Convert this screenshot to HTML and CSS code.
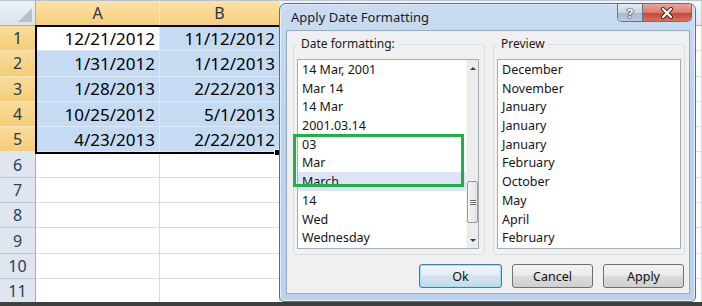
FILE: index.html
```html
<!DOCTYPE html>
<html lang="en">
<head>
    <meta charset="UTF-8">
    <title>Apply Date Formatting</title>
    <link rel="stylesheet" href="styles.css">
</head>
<body>
    <div class="screen">
        <div class="sheet">
            <div class="corner"></div>
            <div class="col-head sel">A</div>
            <div class="col-head sel">B</div>
            <div class="col-head">C</div>

            <div class="row-head sel">1</div>
            <div class="cell active">12/21/2012</div>
            <div class="cell sel">11/12/2012</div>
            <div class="cell"></div>

            <div class="row-head sel">2</div>
            <div class="cell sel">1/31/2012</div>
            <div class="cell sel">1/12/2013</div>
            <div class="cell"></div>

            <div class="row-head sel">3</div>
            <div class="cell sel">1/28/2013</div>
            <div class="cell sel">2/22/2013</div>
            <div class="cell"></div>

            <div class="row-head sel">4</div>
            <div class="cell sel">10/25/2012</div>
            <div class="cell sel">5/1/2013</div>
            <div class="cell"></div>

            <div class="row-head sel">5</div>
            <div class="cell sel">4/23/2013</div>
            <div class="cell sel">2/22/2012</div>
            <div class="cell"></div>

            <div class="row-head">6</div>
            <div class="cell"></div><div class="cell"></div><div class="cell"></div>
            <div class="row-head">7</div>
            <div class="cell"></div><div class="cell"></div><div class="cell"></div>
            <div class="row-head">8</div>
            <div class="cell"></div><div class="cell"></div><div class="cell"></div>
            <div class="row-head">9</div>
            <div class="cell"></div><div class="cell"></div><div class="cell"></div>
            <div class="row-head">10</div>
            <div class="cell"></div><div class="cell"></div><div class="cell"></div>
            <div class="row-head">11</div>
            <div class="cell"></div><div class="cell"></div><div class="cell"></div>

            <div class="selection"></div>
            <div class="fill-handle"></div>
        </div>

        <div class="dialog">
            <div class="titlebar">
                <span class="title">Apply Date Formatting</span>
                <div class="caption-btns">
                    <span class="cap-btn help">?</span>
                    <span class="cap-btn close">
                        <svg width="14" height="12" viewBox="0 0 14 12">
                            <path d="M3 2 L11 10 M11 2 L3 10" stroke="#4a2320" stroke-width="4" stroke-linecap="round"/>
                            <path d="M3 2 L11 10 M11 2 L3 10" stroke="#ffffff" stroke-width="2.2" stroke-linecap="round"/>
                        </svg>
                    </span>
                </div>
            </div>

            <div class="client">
                <div class="groups">
                    <fieldset class="group formats">
                        <legend>Date formatting:</legend>
                        <div class="listbox">
                            <ul class="items">
                                <li>14 Mar, 2001</li>
                                <li>Mar 14</li>
                                <li>14 Mar</li>
                                <li>2001.03.14</li>
                                <li>03</li>
                                <li>Mar</li>
                                <li class="picked">March</li>
                                <li>14</li>
                                <li>Wed</li>
                                <li>Wednesday</li>
                            </ul>
                            <div class="scrollbar">
                                <span class="arrow up"></span>
                                <div class="track">
                                    <div class="thumb"><span class="grip"></span></div>
                                </div>
                                <span class="arrow down"></span>
                            </div>
                        </div>
                    </fieldset>

                    <fieldset class="group preview">
                        <legend>Preview</legend>
                        <div class="listbox">
                            <ul class="items">
                                <li>December</li>
                                <li>November</li>
                                <li>January</li>
                                <li>January</li>
                                <li>January</li>
                                <li>February</li>
                                <li>October</li>
                                <li>May</li>
                                <li>April</li>
                                <li>February</li>
                            </ul>
                        </div>
                    </fieldset>
                </div>

                <div class="buttons">
                    <button class="btn default">Ok</button>
                    <button class="btn">Cancel</button>
                    <button class="btn">Apply</button>
                </div>
            </div>

            <!-- highlight box drawn over the list -->
            <div class="mark"></div>
        </div>
    </div>
    <div class="taskbar"></div>
</body>
</html>
```

FILE: styles.css
```css
* {
    margin: 0;
    padding: 0;
    box-sizing: border-box;
}

body {
    width: 702px;
    height: 306px;
    overflow: hidden;
    background-color: #3f3f3f;
    font-family: "Noto Sans", "Open Sans", sans-serif;
}

.screen {
    position: relative;
    width: 702px;
    height: 302px;
    overflow: hidden;
}

/* ---------- spreadsheet ---------- */

.sheet {
    position: relative;
    display: grid;
    grid-template-columns: 36px 124px 120px 1fr;
    grid-template-rows: 26px repeat(11, 25.3px);
    width: 702px;
    height: 302px;
    background-color: #fff;
    font-size: 16px;
}

.corner {
    position: relative;
    background: linear-gradient(#eef2f7, #dbe3ec);
    border-top: 1px solid #b9c4d2;
    border-right: 1px solid #9eb0c6;
    border-bottom: 1px solid #9eb0c6;
}

.corner::after {
    content: "";
    position: absolute;
    right: 3px;
    bottom: 3px;
    border-left: 14px solid transparent;
    border-bottom: 14px solid #b4c0cf;
}

.col-head {
    display: flex;
    align-items: center;
    justify-content: center;
    border-top: 1px solid #b9c4d2;
    border-right: 1px solid #c5cfdc;
    border-bottom: 1px solid #9eb0c6;
    background: linear-gradient(#f5f7fa, #e2e8f0);
    color: #27415f;
}

.col-head.sel {
    background: linear-gradient(#fbe2a5, #f6cf7d);
    border-right: 1px solid #fbe9c2;
    border-bottom: 1px solid #e3a53c;
    color: #2a3550;
}

.row-head {
    display: flex;
    align-items: center;
    justify-content: center;
    background-color: #dfe6f0;
    border-right: 1px solid #9eb0c6;
    border-bottom: 1px solid #bccadb;
    color: #27415f;
}

.row-head.sel {
    background: linear-gradient(#f9dc9a, #f5cd78);
    border-right: 1px solid #e3a53c;
    border-bottom: 1px solid #fbe7b8;
    color: #2a3550;
}

.cell {
    display: flex;
    align-items: center;
    justify-content: flex-end;
    padding-right: 4px;
    border-right: 1px solid #d9dbde;
    border-bottom: 1px solid #d9dbde;
    font-size: 17px;
    color: #000;
}

.cell.sel {
    background-color: #c5dbf4;
    border-color: #dde8f6;
}

.cell.active {
    background-color: #fff;
    border-color: #dde8f6;
}

.selection {
    position: absolute;
    left: 35px;
    top: 25px;
    width: 250px;
    height: 129px;
    border: 2px solid #000;
    pointer-events: none;
}

.fill-handle {
    position: absolute;
    left: 275px;
    top: 150px;
    width: 5px;
    height: 5px;
    background-color: #000;
    outline: 1px solid #fff;
}

/* ---------- dialog window ---------- */

.dialog {
    position: absolute;
    left: 279px;
    top: 3px;
    width: 417px;
    height: 299px;
    display: flex;
    flex-direction: column;
    border: 1px solid #5f6f83;
    border-radius: 7px 7px 5px 5px;
    background: linear-gradient(#c9dcf1, #bcd3ed 40%, #b9d2ee);
    box-shadow: inset 0 0 0 1px #e4eefa;
    font-size: 12px;
    color: #000;
}

.titlebar {
    display: flex;
    align-items: flex-start;
    justify-content: space-between;
    height: 26px;
    padding-left: 11px;
    padding-right: 3px;
}

.title {
    font-size: 13px;
    line-height: 27px;
    color: #1c1c1c;
}

.caption-btns {
    display: flex;
    height: 18px;
    border: 1px solid #62738a;
    border-top: none;
    border-radius: 0 0 5px 5px;
    overflow: hidden;
}

.cap-btn {
    display: flex;
    align-items: center;
    justify-content: center;
    height: 100%;
}

.cap-btn.help {
    width: 25px;
    border-right: 1px solid #62738a;
    background: linear-gradient(#e4ebf3, #c8d4e2 50%, #a9b9cc 51%, #bccbdc);
    color: #fff;
    font-weight: bold;
    font-size: 13px;
    text-shadow: 0 0 1px #27354a, 0 0 1px #27354a, 0 0 2px #27354a;
}

.cap-btn.close {
    width: 48px;
    background: linear-gradient(#eba69c, #da7b6c 50%, #c34434 51%, #d3725f);
}

.client {
    flex: 1;
    display: flex;
    flex-direction: column;
    margin: 0 5px 7px 6px;
    padding: 0 4px 0 6px;
    background-color: #f0f0f0;
    border: 1px solid #95a9c0;
}

.groups {
    display: flex;
    gap: 8px;
    margin-top: 5px;
}

.group {
    width: 192px;
    border: 1px solid #d5dfe5;
    border-radius: 3px;
    padding: 7px 5px 5px 3px;
}

.group.preview {
    padding: 7px 3px 5px 3px;
}

.group legend {
    padding: 0 4px;
    line-height: 16px;
    font-size: 12px;
    color: #1a1a1a;
}

.listbox {
    display: flex;
    height: 190px;
    border: 1px solid #a7adb5;
    background-color: #fff;
}

.items {
    flex: 1;
    list-style: none;
}

.items li {
    height: 18.7px;
    line-height: 19px;
    padding-left: 4px;
    font-size: 12.5px;
    color: #141414;
    white-space: nowrap;
}

.items li.picked {
    background-color: #dde4f6;
}

.scrollbar {
    display: flex;
    flex-direction: column;
    width: 12px;
    background-color: #ececec;
    border-left: 1px solid #f4f4f4;
}

.arrow {
    position: relative;
    height: 16px;
}

.arrow::after {
    content: "";
    position: absolute;
    left: 3px;
    border-left: 3px solid transparent;
    border-right: 3px solid transparent;
}

.arrow.up::after {
    top: 7px;
    border-bottom: 3px solid #3b3b3b;
}

.arrow.down::after {
    top: 7px;
    border-top: 3px solid #3b3b3b;
}

.track {
    flex: 1;
    padding-top: 105px;
}

.thumb {
    display: flex;
    align-items: center;
    justify-content: center;
    height: 42px;
    border: 1px solid #9a9a9a;
    border-radius: 2px;
    background: linear-gradient(90deg, #f5f5f5, #e3e3e3);
}

.grip {
    width: 6px;
    height: 5px;
    border-top: 1px solid #666;
    border-bottom: 1px solid #666;
    background: linear-gradient(#fff 40%, #666 40%, #666 60%, #fff 60%);
}

.buttons {
    display: flex;
    justify-content: flex-end;
    gap: 10px;
    margin-top: 9px;
    padding-right: 1px;
}

.btn {
    width: 81px;
    height: 24px;
    border: 1px solid #707070;
    border-radius: 3px;
    background: linear-gradient(#f3f3f3, #ebebeb 45%, #dcdcdc 50%, #cfcfcf);
    font-family: "Noto Sans", "Open Sans", sans-serif;
    font-size: 12.5px;
    color: #111;
}

.btn.default {
    width: 83px;
    border-color: #3c7fb1;
    box-shadow: inset 0 0 0 1px #9fdcf6;
    background: linear-gradient(#f1f6fa, #e4eef6 45%, #d4e2ee 50%, #c9dbe9);
}

.mark {
    position: absolute;
    left: 13px;
    top: 130px;
    width: 171px;
    height: 53px;
    border: 3px solid #21ae4b;
    pointer-events: none;
}

.taskbar {
    height: 4px;
    background-color: #3f3f3f;
}
```
